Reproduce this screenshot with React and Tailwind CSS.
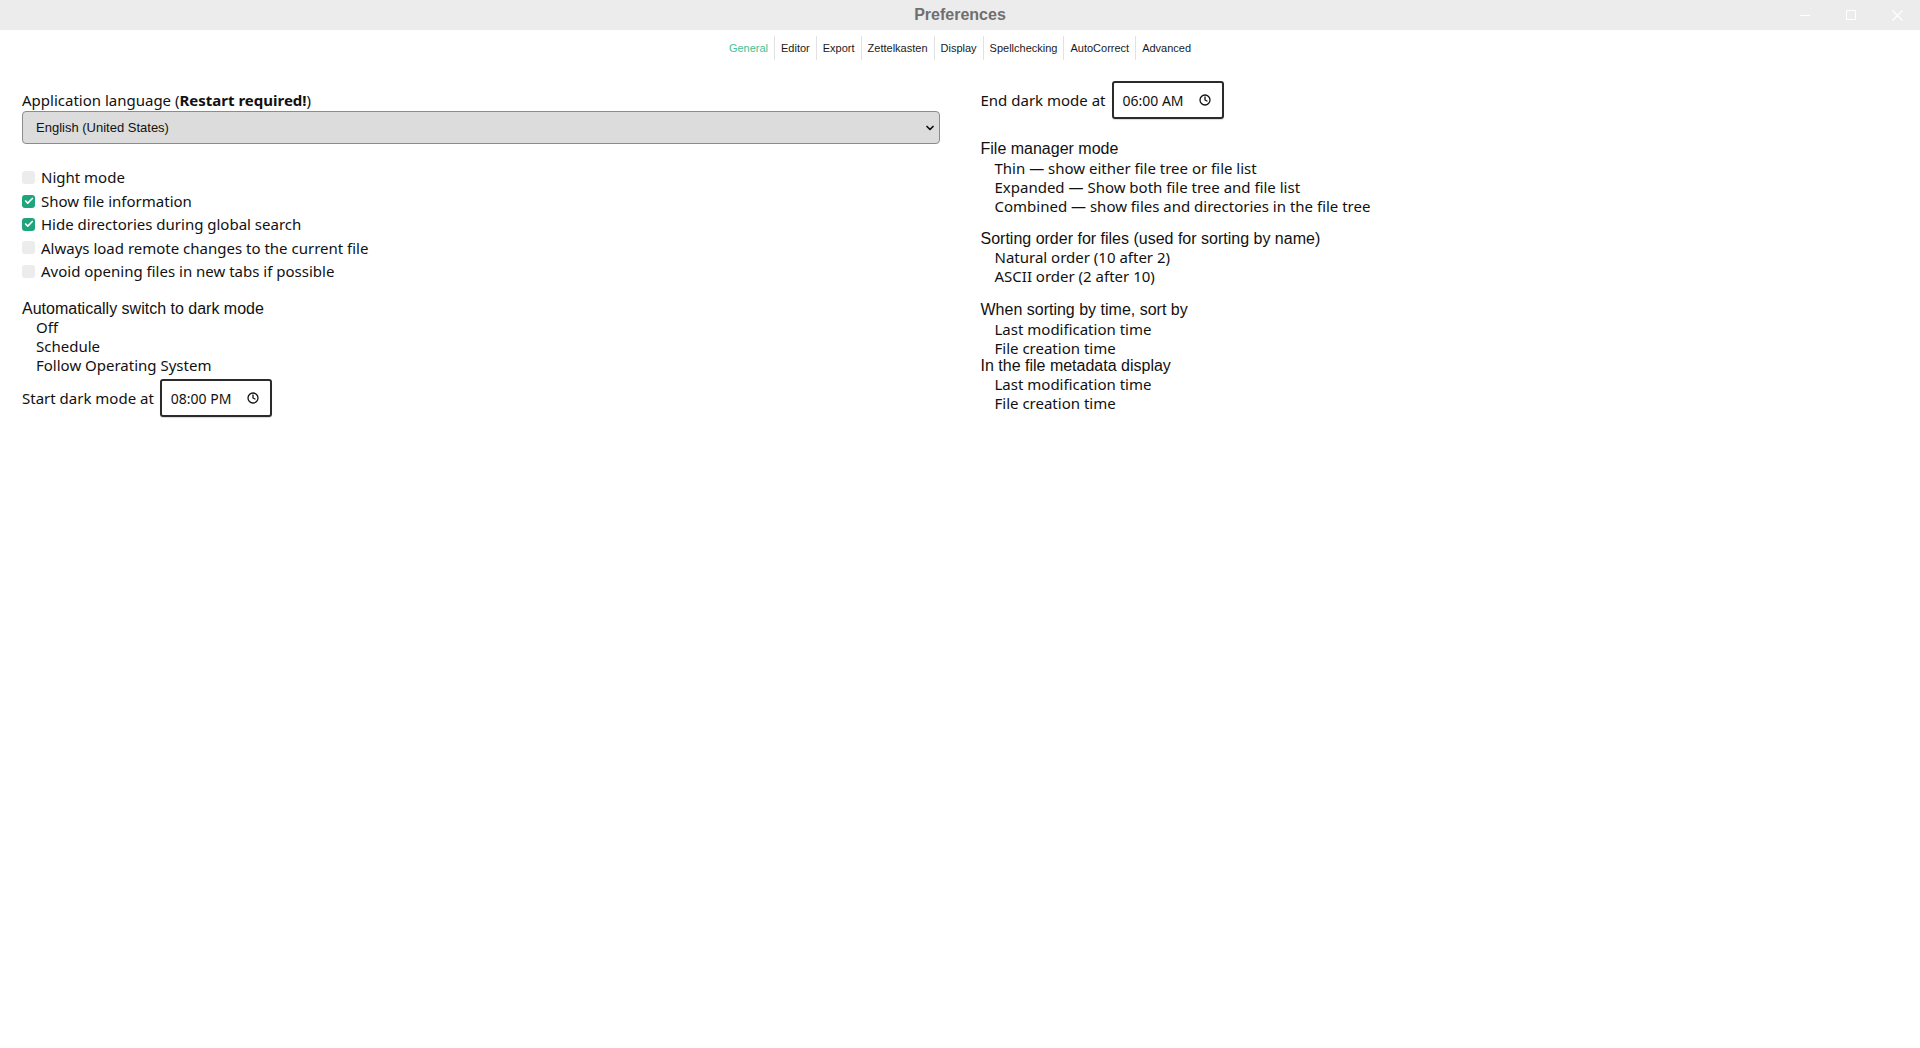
import { Clock, ChevronDown, Check } from "lucide-react"

const body = "font-['Noto_Sans',sans-serif] text-[15px] text-[#111]"
const arial = "font-['Liberation_Sans',Arial,sans-serif]"

const tabs = ["General", "Editor", "Export", "Zettelkasten", "Display", "Spellchecking", "AutoCorrect", "Advanced"]

function CheckRow({ label, checked }) {
  return (
    <div className="flex h-[23.4px] items-center gap-[6px]">
      <span
        className={
          "flex h-[13px] w-[13px] items-center justify-center rounded-[3px] " +
          (checked ? "bg-[#20a47b]" : "bg-[#ececec]")
        }
      >
        {checked && <Check size={10} strokeWidth={4} className="text-white" />}
      </span>
      <span className={body}>{label}</span>
    </div>
  )
}

function Group({ title, items, className = "" }) {
  return (
    <div className={className}>
      <div className={arial + " text-[16px] leading-[19.5px] text-[#111]"}>{title}</div>
      <div className="pl-[14px]">
        {items.map((item) => (
          <div key={item} className={body + " leading-[19px]"}>
            {item}
          </div>
        ))}
      </div>
    </div>
  )
}

function TimeField({ label, value, className = "" }) {
  return (
    <div className={"flex items-center gap-[6px] " + className}>
      <span className={body}>{label}</span>
      <div className="flex h-[38px] w-[112px] items-center justify-between rounded-[3px] border-2 border-[#2b2b2b] pl-[9px] pr-[11px] shadow-[0_1px_1px_rgba(0,0,0,0.15)]">
        <span className="font-['Noto_Sans',sans-serif] text-[14px] text-[#111]">{value}</span>
        <Clock size={12} strokeWidth={2.6} className="text-[#111]" />
      </div>
    </div>
  )
}

function App() {
  return (
    <div className="min-h-screen bg-white">
      {/* title bar */}
      <div className="grid h-[30px] grid-cols-[1fr_auto_1fr] items-center bg-[#ececec]">
        <div />
        <div className={arial + " text-[16px] font-bold text-[#6f6f6f]"}>Preferences</div>
        <div className="flex h-full justify-end">
          <div className="flex w-[46px] items-center justify-center">
            <span className="h-px w-[10px] bg-white" />
          </div>
          <div className="flex w-[46px] items-center justify-center">
            <span className="h-[10px] w-[10px] border border-white" />
          </div>
          <div className="flex w-[46px] items-center justify-center">
            <svg width="11" height="11" viewBox="0 0 11 11" stroke="white" strokeWidth="1.2">
              <path d="M0.5 0.5L10.5 10.5M10.5 0.5L0.5 10.5" />
            </svg>
          </div>
        </div>
      </div>

      {/* tabs */}
      <div className="mt-[6px] flex justify-center">
        {tabs.map((t, i) => (
          <div
            key={t}
            className={
              arial +
              " px-[6px] text-[11px] leading-[24px] " +
              (i > 0 ? "border-l border-[#e2e2e2] " : "") +
              (i === 0 ? "text-[#45c193]" : "text-[#1a1a1a]")
            }
          >
            {t}
          </div>
        ))}
      </div>

      {/* content */}
      <div className="mt-[21px] grid grid-cols-2 gap-x-[41px] px-[22px]">
        <div className="pt-[9px]">
          <div className={body + " leading-[20px]"}>
            Application language (<b>Restart required!</b>)
          </div>
          <div className="mt-px flex h-[33px] items-center justify-between rounded-[4px] border border-[#8c8c8c] bg-[#dcdcdc] pl-[13px] pr-[3px]">
            <span className={arial + " text-[13px] text-[#111]"}>English (United States)</span>
            <ChevronDown size={12} strokeWidth={3.5} className="text-[#111]" />
          </div>

          <div className="mt-[22px]">
            <CheckRow label="Night mode" />
            <CheckRow label="Show file information" checked />
            <CheckRow label="Hide directories during global search" checked />
            <CheckRow label="Always load remote changes to the current file" />
            <CheckRow label="Avoid opening files in new tabs if possible" />
          </div>

          <Group
            className="mt-[16px]"
            title="Automatically switch to dark mode"
            items={["Off", "Schedule", "Follow Operating System"]}
          />
          <TimeField className="mt-[4px]" label="Start dark mode at" value="08:00 PM" />
        </div>

        <div>
          <TimeField label="End dark mode at" value="06:00 AM" />
          <Group
            className="mt-[20px]"
            title="File manager mode"
            items={[
              "Thin — show either file tree or file list",
              "Expanded — Show both file tree and file list",
              "Combined — show files and directories in the file tree",
            ]}
          />
          <Group
            className="mt-[13px]"
            title="Sorting order for files (used for sorting by name)"
            items={["Natural order (10 after 2)", "ASCII order (2 after 10)"]}
          />
          <Group
            className="mt-[14px]"
            title="When sorting by time, sort by"
            items={["Last modification time", "File creation time"]}
          />
          <Group
            className="-mt-[2px]"
            title="In the file metadata display"
            items={["Last modification time", "File creation time"]}
          />
        </div>
      </div>
    </div>
  )
}

export default App
